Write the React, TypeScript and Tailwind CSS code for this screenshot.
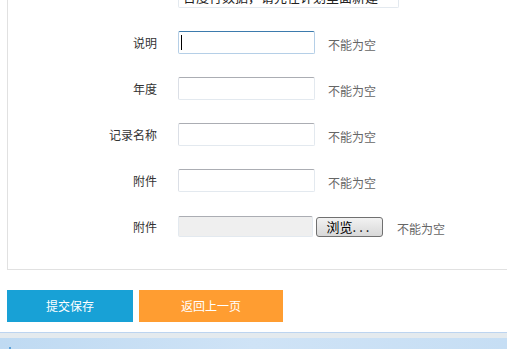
const font = { fontFamily: '"Noto Sans CJK SC", "Liberation Sans", sans-serif' };

function Label({ text }: { text: string }) {
  return (
    <div className="w-[150px] shrink-0 pr-[1px] text-right text-[12px] leading-[23px] text-[#333]">{text}</div>
  );
}

function Hint({ left = 13 }: { left?: number }) {
  return (
    <span
      className={`pt-[4px] text-[12px] leading-[23px] text-[#666] ${left === 13 ? 'ml-[13px]' : 'ml-[14px]'}`}
    >
      不能为空
    </span>
  );
}

function TextRow({ label, focused }: { label: string; focused?: boolean }) {
  return (
    <div className="flex h-[23px] items-center">
      <Label text={label} />
      <div
        className={`ml-[20px] flex h-[23px] w-[137px] items-center border bg-white rounded-[2px] ${
          focused
            ? 'border-[#b5cfe7] border-t-[#3d7bad]'
            : 'border-[#e3e9ef] border-t-[#abadb3] border-l-[#dbdfe6]'
        }`}
      >
        {focused && <span className="ml-[2px] h-[15px] w-[1px] bg-black" />}
      </div>
      <Hint />
    </div>
  );
}

export default function App() {
  return (
    <div className="relative h-[349px] w-[507px] overflow-hidden bg-white" style={font}>
      <div className="ml-[7px] -mt-[15px] border-b border-l border-[#e1e1e1] pb-[31px]">
        <div className="flex flex-col gap-[23px]">
          <div className="flex h-[23px] items-center">
            <div className="w-[150px] shrink-0 pr-[1px] text-right text-[12px] leading-[23px] text-[#333] relative -top-[8px]">
              所属计划名称
            </div>
            <div className="ml-[20px] flex h-[23px] w-[221px] items-center overflow-hidden whitespace-nowrap rounded-[2px] border border-[#e3e9ef] border-t-[#abadb3] pl-[4px] text-[13px] text-[#222]">
              台度行数据，请先在计划里面新建
            </div>
          </div>
          <TextRow label="说明" focused />
          <TextRow label="年度" />
          <TextRow label="记录名称" />
          <TextRow label="附件" />
          <div className="flex h-[23px] items-center">
            <Label text="附件" />
            <div className="ml-[20px] h-[21px] w-[135px] rounded-[2px] border border-[#e3e9ef] border-t-[#abadb3] bg-[#efefef]" />
            <div className="ml-[3px] flex h-[20px] w-[67px] items-center justify-center rounded-[3px] border border-[#707070] bg-gradient-to-b from-[#f2f2f2] to-[#d8d8d8] text-[13px] leading-none text-black">
              浏览<span className="tracking-[3px]">...</span>
            </div>
            <Hint left={14} />
          </div>
        </div>
      </div>

      <div className="mt-[20px] flex gap-[6px] pl-[7px]">
        <button className="h-[32px] w-[126px] bg-[#18a1d6] text-[12px] text-white">提交保存</button>
        <button className="h-[32px] w-[144px] bg-[#ff9d31] text-[12px] text-white">返回上一页</button>
      </div>

      <div className="mt-[10px] border-t border-[#bcd4f0]">
        <div className="h-[5px] bg-[#e4eaee]" />
        <div className="relative h-[12px] bg-gradient-to-r from-[#bfdaf2] via-[#cfe3f6] to-[#c6def4]">
          <span className="absolute left-[9px] top-[9px] h-[3px] w-[2px] bg-[#5aa0d8]" />
        </div>
      </div>
    </div>
  );
}
